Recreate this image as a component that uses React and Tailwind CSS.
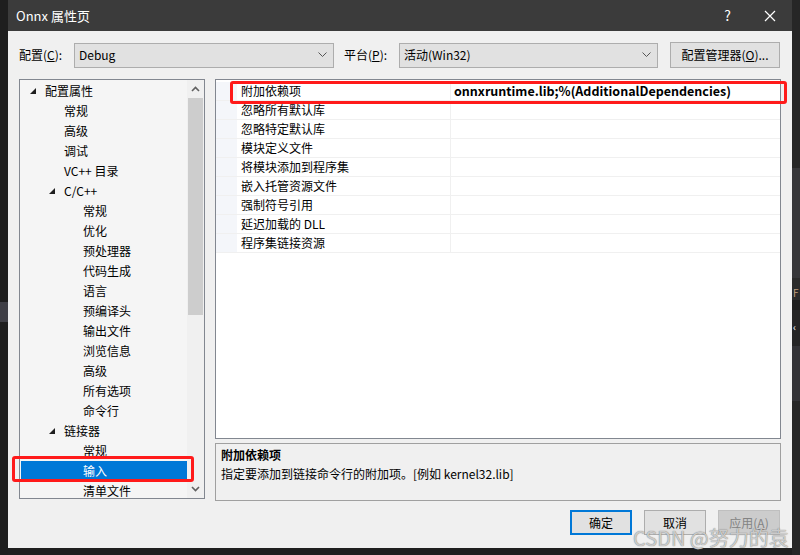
import React from "react";

const treeItems = [
  { label: "配置属性", level: 0, open: true },
  { label: "常规", level: 1 },
  { label: "高级", level: 1 },
  { label: "调试", level: 1 },
  { label: "VC++ 目录", level: 1 },
  { label: "C/C++", level: 1, open: true },
  { label: "常规", level: 2 },
  { label: "优化", level: 2 },
  { label: "预处理器", level: 2 },
  { label: "代码生成", level: 2 },
  { label: "语言", level: 2 },
  { label: "预编译头", level: 2 },
  { label: "输出文件", level: 2 },
  { label: "浏览信息", level: 2 },
  { label: "高级", level: 2 },
  { label: "所有选项", level: 2 },
  { label: "命令行", level: 2 },
  { label: "链接器", level: 1, open: true },
  { label: "常规", level: 2 },
  { label: "输入", level: 2, selected: true },
  { label: "清单文件", level: 2 },
];

const props = [
  { name: "附加依赖项", value: "onnxruntime.lib;%(AdditionalDependencies)" },
  { name: "忽略所有默认库" },
  { name: "忽略特定默认库" },
  { name: "模块定义文件" },
  { name: "将模块添加到程序集" },
  { name: "嵌入托管资源文件" },
  { name: "强制符号引用" },
  { name: "延迟加载的 DLL" },
  { name: "程序集链接资源" },
];

const indent = ["pl-[9px]", "pl-[28px]", "pl-[47px]"];

function Chevron({ up }) {
  return (
    <svg width="9" height="6" viewBox="0 0 9 6">
      <path
        d={up ? "M1 5 L4.5 1.5 L8 5" : "M1 1 L4.5 4.5 L8 1"}
        fill="none"
        stroke="#606060"
        strokeWidth="1.6"
      />
    </svg>
  );
}

function Expander() {
  return (
    <svg width="6" height="6" viewBox="0 0 6 6" className="shrink-0">
      <polygon points="6,0 6,6 0,6" fill="#1e1e1e" />
    </svg>
  );
}

function Combo({ text, width }) {
  return (
    <div
      className={`${width} h-[25px] flex items-center justify-between border border-[#adadad] bg-[#e1e1e1] pl-[4px] pr-[6px]`}
    >
      <span>{text}</span>
      <svg width="9" height="6" viewBox="0 0 9 6">
        <path d="M0.5 0.5 L4.5 4.5 L8.5 0.5" fill="none" stroke="#555" strokeWidth="1" />
      </svg>
    </div>
  );
}

export default function App() {
  return (
    <div className="relative w-[800px] h-[555px] flex bg-[#1f1f1f] overflow-hidden font-['Noto_Sans_CJK_SC','Microsoft_YaHei',sans-serif] text-[12px] text-black">
      {/* left strip of the IDE behind */}
      <div className="w-[8px] flex flex-col">
        <div className="h-[302px] bg-[#1e1e1e]" />
        <div className="h-[20px] bg-[#3f3f46]" />
        <div className="flex-1 bg-[#1e1e1e]" />
      </div>

      {/* dialog */}
      <div className="relative w-[784px] h-[548px] flex flex-col bg-[#f0f0f0]">
        <div className="h-[31px] flex items-center justify-between bg-[#3b3b3b] text-white pl-[8px] pr-[16px]">
          <span className="text-[13px]">Onnx 属性页</span>
          <div className="flex items-center gap-[33px]">
            <span className="text-[14px]">?</span>
            <svg width="12" height="12" viewBox="0 0 12 12">
              <path d="M1 1 L11 11 M11 1 L1 11" stroke="#fff" strokeWidth="1.2" />
            </svg>
          </div>
        </div>

        <div className="mt-[11px] h-[26px] flex items-center pl-[11px]">
          <span className="w-[55px]">
            配置(<span className="underline">C</span>):
          </span>
          <Combo text="Debug" width="w-[260px]" />
          <span className="w-[55px] ml-[10px]">
            平台(<span className="underline">P</span>):
          </span>
          <Combo text="活动(Win32)" width="w-[259px]" />
          <button className="ml-[12px] w-[110px] h-[26px] border border-[#adadad] bg-[#e1e1e1]">
            配置管理器(<span className="underline">O</span>)...
          </button>
        </div>

        <div className="mt-[11px] flex pl-[11px]">
          {/* tree */}
          <div className="w-[186px] h-[420px] flex border border-[#828790] bg-[#f5f5f5]">
            <div className="flex-1 pt-[1px] overflow-hidden">
              {treeItems.map((it, i) => (
                <div
                  key={i}
                  className={`h-[20px] ml-[1px] flex items-center ${indent[it.level]} ${
                    it.selected ? "bg-[#0078d7] text-white" : ""
                  }`}
                >
                  <span className="w-[15px] flex">{it.open && <Expander />}</span>
                  <span className="whitespace-nowrap">{it.label}</span>
                </div>
              ))}
            </div>
            <div className="w-[17px] flex flex-col bg-[#f0f0f0]">
              <div className="h-[18px] flex items-center justify-center">
                <Chevron up />
              </div>
              <div className="h-[217px] mx-[1px] bg-[#cdcdcd]" />
              <div className="flex-1" />
              <div className="h-[18px] flex items-center justify-center">
                <Chevron />
              </div>
            </div>
          </div>

          {/* right column */}
          <div className="ml-[10px] w-[566px] flex flex-col gap-[4px]">
            <div className="h-[360px] border border-[#828790] bg-white pt-[2px]">
              {props.map((p, i) => (
                <div key={i} className="h-[19px] flex border-b border-[#f0f0f0]">
                  <div className="w-[21px] bg-[#f4f6fa]" />
                  <div className="w-[214px] pl-[4px] flex items-center border-r border-[#f0f0f0]">
                    {p.name}
                  </div>
                  <div className="flex-1 pl-[3px] flex items-center font-bold text-[12.5px]">
                    {p.value}
                  </div>
                </div>
              ))}
            </div>
            <div className="h-[58px] border border-[#a0a0a0] bg-[#f0f0f0] pl-[5px] pt-[1px] leading-[19px]">
              <div className="font-bold">附加依赖项</div>
              <div>指定要添加到链接命令行的附加项。[例如 kernel32.lib]</div>
            </div>
          </div>
        </div>

        <div className="mt-[9px] flex justify-end gap-[12px] pr-[12px]">
          <button className="w-[62px] h-[25px] border-2 border-[#0078d7] bg-[#e1e1e1]">确定</button>
          <button className="w-[62px] h-[25px] border border-[#adadad] bg-[#e1e1e1]">取消</button>
          <button className="w-[62px] h-[25px] border border-[#bfbfbf] bg-[#cccccc] text-[#838383]">
            应用(<span className="underline">A</span>)
          </button>
        </div>

        {/* red annotations */}
        <div className="absolute left-[222px] top-[81px] w-[557px] h-[23px] border-[3px] border-[#ff1a1a] rounded-[3px]" />
        <div className="absolute left-[4px] top-[456px] w-[182px] h-[26px] border-[3px] border-[#ff1a1a] rounded-[3px]" />
      </div>

      {/* right strip of the IDE behind */}
      <div className="w-[8px] flex flex-col text-[10px] leading-none">
        <div className="h-[168px] bg-[#262626]" />
        <div className="h-[110px] bg-[#37373a]" />
        <div className="h-[22px] bg-[#2b2b2b] text-[#c0a080] pl-[1px] pt-[10px]">F</div>
        <div className="h-[10px] bg-[#1e1e1e]" />
        <div className="h-[36px] bg-[#252526] text-white pl-[1px] pt-[12px]">‹</div>
        <div className="h-[55px] bg-[#333337]" />
        <div className="flex-1 bg-[#262626]" />
      </div>

      {/* watermark */}
      <div className="absolute left-[633px] top-[526px] text-[20px] leading-[24px] text-[#e6e6e6]/80 [text-shadow:0_0_1px_#555] whitespace-nowrap">
        CSDN @努力的袁
      </div>
    </div>
  );
}
